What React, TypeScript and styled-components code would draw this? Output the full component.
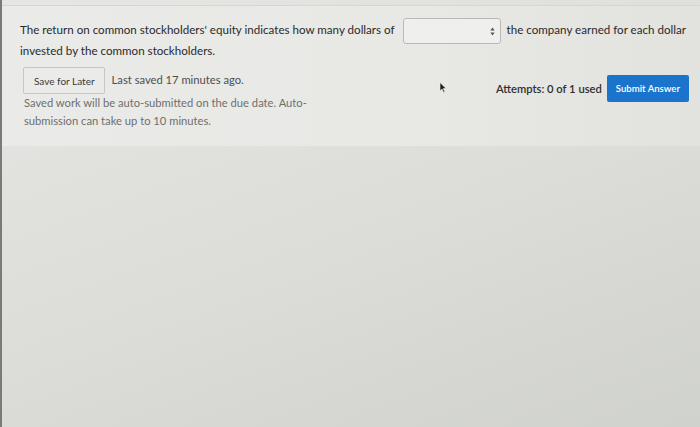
import React from "react";
import styled, { createGlobalStyle } from "styled-components";

const Global = createGlobalStyle`
  html, body { margin: 0; padding: 0; }
  body {
    width: 700px;
    height: 427px;
    overflow: hidden;
    font-family: Lato, "Open Sans", sans-serif;
    background: linear-gradient(160deg, #e6e6e4 0%, #dcdcd8 55%, #d0d2ce 100%);
  }
`;

const Page = styled.div`
  position: relative;
  width: 700px;
  height: 427px;
  border-left: 2px solid #7a7a78;
  box-sizing: border-box;
  padding-top: 5px;
`;

const Card = styled.section`
  background: linear-gradient(90deg, #eaeae8 0%, #e8e8e5 60%, #e2e2df 100%);
  border-top: 1px solid #d6d6d3;
  padding: 13px 10px 16px 18px;
  display: flex;
  flex-direction: column;
`;

const Prompt = styled.p`
  margin: 0;
  font-size: 11.6px;
  line-height: 21px;
  color: #2a2a2a;
`;

const Select = styled.span`
  display: inline-flex;
  align-items: center;
  justify-content: flex-end;
  vertical-align: middle;
  width: 98px;
  height: 26px;
  box-sizing: border-box;
  margin: -4px 6px -4px 8px;
  padding-right: 5px;
  border: 1px solid #b9b9b7;
  border-radius: 3px;
  background: #efefed;
  position: relative;
  top: 0;
`;

const Footer = styled.div`
  display: flex;
  align-items: flex-start;
  justify-content: space-between;
  margin-top: 6px;
`;

const SaveCol = styled.div`
  display: flex;
  flex-direction: column;
  padding-left: 3px;
`;

const SaveRow = styled.div`
  display: flex;
  align-items: center;
  gap: 7px;
`;

const SaveButton = styled.button`
  font-family: inherit;
  font-size: 10px;
  color: #3a3a3a;
  background: #ebebe9;
  border: 1px solid #c6c6c3;
  border-radius: 2px;
  height: 27px;
  padding: 0 9px 0 10px;
`;

const SavedNote = styled.span`
  font-size: 11.2px;
  color: #4e4e4e;
  position: relative;
  top: -1px;
`;

const AutoNote = styled.p`
  margin: 0 0 0 1px;
  width: 300px;
  font-size: 11.2px;
  line-height: 18px;
  color: #6f6f6d;
`;

const SubmitArea = styled.div`
  display: flex;
  align-items: center;
  gap: 5px;
  margin-top: 8px;
  padding-right: 1px;
`;

const Attempts = styled.span`
  font-size: 11.2px;
  font-weight: 600;
  color: #2f2f2f;
`;

const SubmitButton = styled.button`
  font-family: inherit;
  font-size: 9.6px;
  font-weight: 600;
  color: #ffffff;
  background: #1b74cc;
  border: none;
  border-radius: 2px;
  height: 27px;
  padding: 0 9px;
`;

const Pointer = styled.svg`
  position: absolute;
  left: 437px;
  top: 82px;
`;

export default function App() {
  return (
    <>
      <Global />
      <Page>
        <Card>
          <Prompt>
            The return on common stockholders' equity indicates how many dollars of
            <Select>
              <svg width="5" height="9" viewBox="0 0 5 9">
                <path d="M2.5 0.5 L4.6 3.4 H0.4 Z" fill="#555" />
                <path d="M2.5 8.5 L4.6 5.6 H0.4 Z" fill="#555" />
              </svg>
            </Select>
            the company earned for each dollar invested by the common stockholders.
          </Prompt>
          <Footer>
            <SaveCol>
              <SaveRow>
                <SaveButton>Save for Later</SaveButton>
                <SavedNote>Last saved 17 minutes ago.</SavedNote>
              </SaveRow>
              <AutoNote>
                Saved work will be auto-submitted on the due date. Auto-submission can take up to 10 minutes.
              </AutoNote>
            </SaveCol>
            <SubmitArea>
              <Attempts>Attempts: 0 of 1 used</Attempts>
              <SubmitButton>Submit Answer</SubmitButton>
            </SubmitArea>
          </Footer>
        </Card>
        <Pointer width="8" height="11" viewBox="0 0 8 11">
          <path d="M1 0.5 L1 9 L3 7 L4.6 10.4 L5.8 9.8 L4.3 6.6 L7 6.4 Z" fill="#1e1e1e" stroke="#f2f2f2" strokeWidth="0.6" />
        </Pointer>
      </Page>
    </>
  );
}
